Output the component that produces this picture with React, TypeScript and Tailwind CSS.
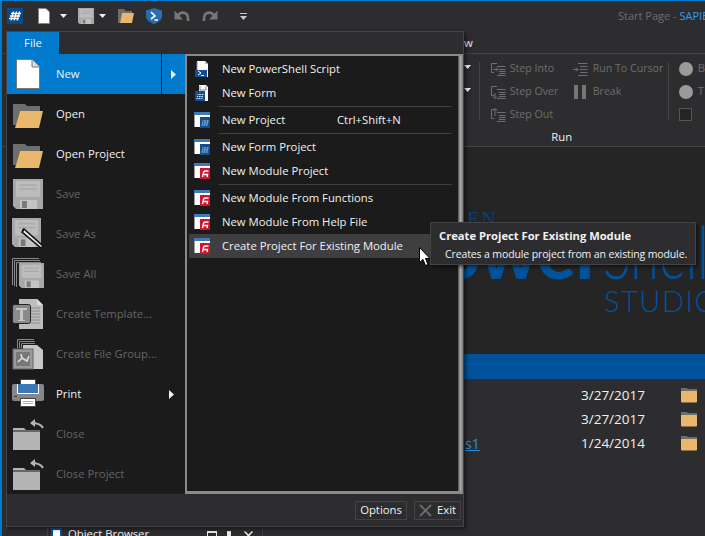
import React from 'react';

const G = '#b4b4b4';
const TAN = '#e8b76b';

// large (32px) menu icons
const BigDoc = () => (
  <svg width="32" height="32" viewBox="0 0 32 32" className="shrink-0">
    <path d="M4.5 1.5H20L27.5 9V29.5a1 1 0 0 1-1 1H5.5a1 1 0 0 1-1-1Z" fill="#fff" stroke="#777" />
    <path d="M20 1.5V9H27.5" fill="#ddd" stroke="#777" />
  </svg>
);

const BigFolder = () => (
  <svg width="32" height="32" viewBox="0 0 32 32" className="shrink-0">
    <path d="M1 6H13L15 8H28V13H8L4 27H1Z" fill="#6e6e6e" />
    <path d="M8 13H31L27 30H3Z" fill={TAN} />
  </svg>
);

const Floppy = ({ x = 1, y = 1, s = 30 }: { x?: number; y?: number; s?: number }) => (
  <g transform={`translate(${x} ${y}) scale(${s / 30})`}>
    <path d="M0 0H30V30H3L0 27Z" fill="#a8a8a8" />
    <rect x="3" y="2" width="24" height="16" rx="1" fill="#bcbcbc" />
    <path d="M6 6H24M6 10H24" stroke="#a0a0a0" strokeWidth="1" />
    <rect x="7" y="21" width="17" height="9" fill="#c4c4c4" />
    <rect x="9" y="22" width="5" height="7" fill="#7a7a7a" />
  </g>
);

const BigSave = () => (
  <svg width="32" height="32" viewBox="0 0 32 32" className="shrink-0">
    <Floppy />
  </svg>
);

const BigSaveAs = () => (
  <svg width="32" height="32" viewBox="0 0 32 32" className="shrink-0">
    <Floppy x={0} y={0} s={29} />
    <path d="M12 11L31 28L29 30L10 14Z" fill="#e4e4e4" stroke="#111" strokeWidth="1.6" />
    <path d="M10 11L13 11L11 14Z" fill="#111" />
  </svg>
);

const BigSaveAll = () => (
  <svg width="32" height="32" viewBox="0 0 32 32" className="shrink-0">
    <path d="M0.5 27V0.5H27M2.5 28V2.5H28M4.5 29V4.5H29" fill="none" stroke="#8a8a8a" />
    <Floppy x={7} y={5} s={25} />
  </svg>
);

const BigTemplate = () => (
  <svg width="32" height="32" viewBox="0 0 32 32" className="shrink-0">
    <path d="M7 1H25L31 7V31H7Z" fill="#bdbdbd" />
    <path d="M25 1V7H31" fill="#ddd" />
    <path d="M19 10H28M19 13H28M19 16H28M19 19H28M19 22H28M19 25H28" stroke="#8a8a8a" />
    <rect x="0.5" y="6.5" width="18" height="19" rx="2" fill="#8a8a8a" stroke="#222" />
    <path d="M4 10H15V12H11V22H13V23H6V22H8V12H4Z" fill="#c4c4c4" />
  </svg>
);

const BigGroup = () => (
  <svg width="32" height="32" viewBox="0 0 32 32" className="shrink-0">
    <path d="M5.5 10V1.5H22M7.5 10V3.5H23M9.5 10V5.5H23" fill="none" stroke="#8a8a8a" />
    <path d="M11 7H25L31 12V31H11Z" fill="#c8c8c8" />
    <rect x="1" y="11" width="20" height="20" fill="#9a9a9a" stroke="#666" />
    <rect x="4" y="14" width="14" height="14" fill="#777" />
    <path d="M6 24L10 20L9 16M10 20L15 23L17 18" fill="none" stroke="#ddd" strokeWidth="1.6" />
  </svg>
);

const BigPrint = () => (
  <svg width="32" height="32" viewBox="0 0 32 32" className="shrink-0">
    <rect x="8.5" y="1.5" width="15" height="8" fill="#fff" stroke="#444" />
    <rect y="6" width="32" height="17" rx="2" fill="#868686" />
    <rect x="5" y="6" width="22" height="10" rx="1" fill="#fff" />
    <rect x="6" y="6" width="20" height="9" fill="#3b78b8" />
    <rect x="2" y="18" width="3" height="1" fill="#333" />
    <rect x="8.5" y="20.5" width="15" height="8" fill="#fff" stroke="#444" />
    <path d="M11 23.5H21M11 25.5H21" stroke="#8fb3d9" />
  </svg>
);

const BigClose = () => (
  <svg width="32" height="32" viewBox="0 0 32 32" className="shrink-0">
    <path d="M1 10H12L14 12H28V32H1Z" fill={G} />
    <path d="M1 13H28" stroke="#1b1b1b" strokeWidth="1" />
    <path d="M31 10C29 6 25 5 19 5" fill="none" stroke={G} strokeWidth="2" />
    <path d="M23 1L18 5L23 9Z" fill={G} />
  </svg>
);

// small (16px) panel icons
const DocPS = () => (
  <svg width="16" height="16" viewBox="0 0 16 16" className="shrink-0">
    <path d="M3 0H11L14 3V16H3Z" fill="#fff" />
    <path d="M11 0V3H14" fill="#bbb" />
    <path d="M3 1V9" stroke="#888" />
    <rect x="1" y="9" width="12" height="7" fill="#0f4f91" />
    <path d="M4 10L7 12L4 14M7 14.5H10" fill="none" stroke="#fff" />
  </svg>
);

const Grid = ({ x, y }: { x: number; y: number }) => (
  <g>
    <path
      d={`M${x + 2} ${y + 3}H${x + 8}M${x + 1.5} ${y + 5}H${x + 7.5}M${x + 1} ${y + 7}H${x + 7}`}
      stroke="#dbe8f7"
      strokeWidth="1"
    />
    <path
      d={`M${x + 3.5} ${y + 2}L${x + 2.5} ${y + 8}M${x + 6} ${y + 2}L${x + 5} ${y + 8}`}
      stroke="#0f4f91"
      strokeWidth="0.8"
    />
  </g>
);

const DocForm = () => (
  <svg width="16" height="16" viewBox="0 0 16 16" className="shrink-0">
    <path d="M5 0H12L14 2V16H5Z" fill="#fff" />
    <path d="M6 1V5H12V1" fill="none" stroke="#888" />
    <rect x="1" y="6" width="10" height="10" fill="#0f4f91" />
    <Grid x={1.5} y={6.5} />
  </svg>
);

const ProjectIcon = ({ red }: { red?: boolean }) => (
  <svg width="16" height="16" viewBox="0 0 16 16" className="shrink-0">
    <rect width="16" height="15" fill="#fff" />
    <rect width="16" height="3" fill="#3e7ab8" />
    <rect x="0" y="3" width="1" height="12" fill="#999" />
    <rect x="6" y="5" width="10" height="11" fill={red ? '#d2122e' : '#0f4f91'} />
    {red ? (
      <path d="M8.5 14L9.5 9.5Q9.7 8 11.5 8H14.5M9.5 11.5H13.5L13 14" fill="none" stroke="#fff" strokeWidth="1.4" />
    ) : (
      <Grid x={6.5} y={6} />
    )}
  </svg>
);

// toolbar
const AppLogo = () => (
  <svg width="16" height="16" viewBox="0 0 16 16" className="shrink-0">
    <rect width="16" height="16" fill="#0b4a88" />
    <path d="M4 5.5H14M3 8H13M2 10.5H12" stroke="#fff" strokeWidth="1.3" />
    <path d="M6.5 3.5L4 12.5M9.5 3.5L7 12.5M12.5 3.5L10 12.5" stroke="#fff" strokeWidth="1.2" />
  </svg>
);

const DropArrow = () => (
  <svg width="7" height="4" viewBox="0 0 7 4" className="shrink-0">
    <path d="M0 0H7L3.5 4Z" fill="#f1f1f1" />
  </svg>
);

const SmallFolder = () => (
  <svg width="16" height="16" viewBox="0 0 16 16" className="shrink-0">
    <path d="M0 1H6L7 2H16V5H0Z" fill="#6e6e6e" />
    <path d="M0 4H16V14.5a1 1 0 0 1-1 1H1a1 1 0 0 1-1-1Z" fill={TAN} />
  </svg>
);

const ToolbarFolder = () => (
  <svg width="16" height="16" viewBox="0 0 16 16" className="shrink-0">
    <path d="M0 1H6L8 3H14V6H4L2 15H0Z" fill="#6e6e6e" />
    <path d="M4 5H16L14 15H2Z" fill={TAN} />
  </svg>
);

const Shield = () => (
  <svg width="16" height="16" viewBox="0 0 16 16" className="shrink-0">
    <path d="M8 0L16 2.5V8C16 12 12 14.5 8 16C4 14.5 0 12 0 8V2.5Z" fill="#2a6db0" />
    <path d="M5 4L9 8L5 11M8.5 12H12" fill="none" stroke="#fff" strokeWidth="1.6" />
  </svg>
);

const Undo = ({ flip }: { flip?: boolean }) => (
  <svg width="16" height="16" viewBox="0 0 16 16" className={`shrink-0 ${flip ? '-scale-x-100' : ''}`}>
    <path d="M4 7.5Q7 3.5 11 5Q14.5 6.5 14 13" fill="none" stroke="#777" strokeWidth="2.6" />
    <path d="M0.5 2.5V11.5H9Z" fill="#777" />
  </svg>
);

const Overflow = () => (
  <svg width="7" height="7" viewBox="0 0 7 7" className="shrink-0">
    <path d="M0 0H7V1H0Z" fill="#c8c8c8" />
    <path d="M0 3H7L3.5 7Z" fill="#c8c8c8" />
  </svg>
);

// ribbon
const Step = ({ kind }: { kind: string }) => (
  <svg width="16" height="16" viewBox="0 0 16 16" className="shrink-0" fill="none" stroke="#6f6f6f">
    <path d="M7 2.5H1.5V11.5H4" />
    <path d="M7 5.5H15.5M9 8.5H15.5M9 10.5H15.5M9 12.5H15.5M7 14.5H15.5" />
    {kind === 'into' && <path d="M3 8.5H8M6 6.5L8 8.5L6 10.5" />}
    {kind === 'over' && <path d="M5 9V14.5M3 12.5L5 14.5L7 12.5" />}
    {kind === 'out' && <path d="M5 9V1.5M3 3.5L5 1.5L7 3.5" />}
  </svg>
);

const RunCursor = () => (
  <svg width="16" height="16" viewBox="0 0 16 16" className="shrink-0" fill="none" stroke="#6f6f6f">
    <path d="M6 2.5H15.5M8 5.5H15.5M8 8.5H15.5M8 11.5H15.5M6 14.5H15.5" />
    <path d="M1 8.5H6M4 6.5L6 8.5L4 10.5" />
  </svg>
);

const Pause = () => (
  <svg width="16" height="16" viewBox="0 0 16 16" className="shrink-0">
    <rect x="2" y="1" width="4" height="14" fill="#777" />
    <rect x="10" y="1" width="4" height="14" fill="#777" />
  </svg>
);

const mainItems = [
  { label: 'New', icon: <BigDoc />, active: true },
  { label: 'Open', icon: <BigFolder />, on: true },
  { label: 'Open Project', icon: <BigFolder />, on: true },
  { label: 'Save', icon: <BigSave /> },
  { label: 'Save As', icon: <BigSaveAs /> },
  { label: 'Save All', icon: <BigSaveAll /> },
  { label: 'Create Template...', icon: <BigTemplate /> },
  { label: 'Create File Group...', icon: <BigGroup /> },
  { label: 'Print', icon: <BigPrint />, on: true, arrow: true },
  { label: 'Close', icon: <BigClose /> },
  { label: 'Close Project', icon: <BigClose /> },
];

const Arrow = () => (
  <svg width="5" height="9" viewBox="0 0 5 9" className="shrink-0">
    <path d="M0 0L5 4.5L0 9Z" fill="#f1f1f1" />
  </svg>
);

const SubItem = ({ icon, label, keys, hover }: { icon: React.ReactNode; label: string; keys?: string; hover?: boolean }) => (
  <div className={`flex h-[24px] items-center pl-[5px] ${hover ? 'bg-[#3f3f41]' : ''}`}>
    {icon}
    <span className="ml-[12px] w-[115px] whitespace-nowrap">{label}</span>
    {keys && <span className="whitespace-nowrap">{keys}</span>}
  </div>
);

const SubSep = () => (
  <div className="flex h-[3px] items-center pl-[30px] pr-[6px]">
    <div className="h-px w-full bg-[#3f3f41]" />
  </div>
);

const RibbonRow = ({ icon, label, gap }: { icon: React.ReactNode; label: string; gap: string }) => (
  <div className={`flex h-[23px] items-center whitespace-nowrap text-[10.6px] ${gap}`}>
    {icon}
    <span>{label}</span>
  </div>
);

const rows = [
  { date: '3/27/2017' },
  { date: '3/27/2017' },
  { date: '1/24/2014', link: 's1' },
];

export default function App() {
  return (
    <div className="relative flex h-[536px] w-[705px] flex-col overflow-hidden border-l-2 border-t border-[#007acc] bg-[#2d2d30] font-['Open_Sans',sans-serif] text-[11.3px] text-[#f1f1f1]">
      {/* title bar and quick access */}
      <div className="flex h-[30px] shrink-0 items-center pl-[5px]">
        <AppLogo />
        <div className="ml-[7px] h-[16px] w-px bg-[#46464a]" />
        <div className="ml-[8px] flex w-[16px] justify-center">
          <svg width="12" height="16" viewBox="0 0 12 16">
            <path d="M0.5 0.5H8L11.5 4V15.5H0.5Z" fill="#fff" stroke="#888" />
          </svg>
        </div>
        <div className="ml-[10px]">
          <DropArrow />
        </div>
        <div className="ml-[11px]">
          <svg width="16" height="16" viewBox="0 0 30 30">
            <Floppy x={0} y={0} s={30} />
          </svg>
        </div>
        <div className="ml-[5px]">
          <DropArrow />
        </div>
        <div className="ml-[12px]">
          <ToolbarFolder />
        </div>
        <div className="ml-[12px]">
          <Shield />
        </div>
        <div className="ml-[12px]">
          <Undo />
        </div>
        <div className="ml-[12px]">
          <Undo flip />
        </div>
        <div className="ml-[22px]">
          <Overflow />
        </div>
        <span className="ml-[371px] whitespace-nowrap text-[11px] text-[#6d6d6d]">
          Start Page - <span className="text-[#3399ff]">SAPIEN PowerShell Studio</span>
        </span>
      </div>

      {/* ribbon tabs */}
      <div className="flex h-[23px] shrink-0 items-end border-b border-[#434346] pb-[1px] pl-[462px]">
        <span>w</span>
      </div>

      {/* ribbon body */}
      <div className="flex h-[93px] shrink-0 border-b border-[#434346] pl-[462px] text-[#6d6d6d]">
        <div className="flex w-[15px] flex-col gap-[19px] pt-[11px]">
          <DropArrow />
          <DropArrow />
        </div>
        <div className="mt-[8px] h-[58px] w-px bg-[#434346]" />
        <div className="flex w-[191px] flex-col">
          <div className="flex pl-[10px] pt-[3px]">
            <div className="w-[82px]">
              <RibbonRow icon={<Step kind="into" />} label="Step Into" gap="gap-[4px]" />
              <RibbonRow icon={<Step kind="over" />} label="Step Over" gap="gap-[4px]" />
              <RibbonRow icon={<Step kind="out" />} label="Step Out" gap="gap-[4px]" />
            </div>
            <div>
              <RibbonRow icon={<RunCursor />} label="Run To Cursor" gap="gap-[5px]" />
              <RibbonRow icon={<Pause />} label="Break" gap="gap-[5px]" />
            </div>
          </div>
          <div className="mt-[3px] pr-[24px] text-center text-[#f1f1f1]">Run</div>
        </div>
        <div className="mt-[8px] h-[58px] w-px bg-[#434346]" />
        <div className="flex flex-col pl-[10px] pt-[3px]">
          <div className="flex h-[23px] items-center gap-[5px]">
            <div className="h-[14px] w-[14px] rounded-full bg-[#9a9a9a]" />
            <span>B</span>
          </div>
          <div className="flex h-[23px] items-center gap-[5px]">
            <div className="h-[14px] w-[14px] rounded-full bg-[#9a9a9a]" />
            <span>T</span>
          </div>
          <div className="flex h-[23px] items-center gap-[5px]">
            <div className="h-[13px] w-[13px] border border-[#555] bg-[#252526]" />
          </div>
        </div>
      </div>

      {/* docked panel and start page */}
      <div className="flex min-h-0 flex-1">
        <div className="w-[261px] shrink-0 border-r border-[#3f3f41] pl-[45px] pt-[380px]">
          <div className="flex h-[20px] items-start border-l border-[#434346] pl-[3px]">
            <div className="mt-[1px] h-[11px] w-[11px] shrink-0 border-2 border-[#0f4f91] bg-white" />
            <span className="ml-[6px] mt-[1px] whitespace-nowrap leading-[12px]">Object Browser</span>
            <div className="ml-[58px] mt-[4px] h-[9px] w-[10px] shrink-0 border border-t-2 border-[#e8e8e8]" />
            <div className="ml-[10px] mt-[4px] h-[9px] w-[4px] shrink-0 bg-[#e8e8e8]" />
            <svg width="9" height="9" viewBox="0 0 9 9" className="ml-[13px] mt-[4px] shrink-0">
              <path d="M0.5 0.5L8.5 8.5M8.5 0.5L0.5 8.5" stroke="#e8e8e8" strokeWidth="1.5" />
            </svg>
          </div>
        </div>
        <div className="flex min-w-0 flex-1 flex-col bg-[#252526]">
          <div className="h-[64px] shrink-0" />
          <div className="h-[16px] shrink-0 whitespace-nowrap pl-[153px] font-['Liberation_Serif',serif] text-[20px] leading-[16px] tracking-[2px] text-[#0b3f70]">
            SAPIEN
          </div>
          <div className="h-[62px] shrink-0 whitespace-nowrap pl-[132px] font-['Lato',sans-serif] text-[72px] leading-[49px] text-[#00529b]">
            <span className="font-black">Power</span>
            <span className="inline-block origin-left scale-x-[0.72] font-light">Shell</span>
          </div>
          <div className="h-[65px] shrink-0 whitespace-nowrap pl-[341px] font-['Lato',sans-serif] text-[29px] font-light leading-[23px] tracking-[1.5px] text-[#00529b]">
            STUDIO
          </div>
          <div className="h-[25px] shrink-0 bg-[#00529b]" />
          <div className="flex-1 bg-[#2d2d30] pt-[4px]">
            {rows.map((r, i) => (
              <div key={i} className="relative flex h-[24px] items-center pl-[318px]">
                {r.link && (
                  <a href="#s1" className="absolute left-[202px] text-[14px] text-[#2f8de4] underline">
                    {r.link}
                  </a>
                )}
                <span className="w-[100px] text-[13.5px]">{r.date}</span>
                <SmallFolder />
              </div>
            ))}
          </div>
        </div>
      </div>

      {/* file menu */}
      <div className="absolute left-[4px] top-[30px] flex h-[496px] w-[458px] flex-col border border-[#434346] bg-[#2d2d30] shadow-[2px_2px_4px_rgba(0,0,0,0.5)]">
        <div className="h-[22px] shrink-0">
          <div className="flex h-[22px] w-[52px] items-center justify-center bg-[#007acc]">File</div>
        </div>
        <div className="flex h-[440px] shrink-0 bg-[#1b1b1b]">
          <div className="w-[178px] shrink-0">
            {mainItems.map((m) => (
              <div
                key={m.label}
                className={`flex h-[40px] items-center pl-[5px] ${m.active ? 'bg-[#007acc]' : ''} ${
                  m.active || m.on ? 'text-[#f1f1f1]' : 'text-[#656565]'
                }`}
              >
                {m.icon}
                <span className="ml-[12px] whitespace-nowrap">{m.label}</span>
                {m.active && (
                  <div className="ml-auto flex h-full w-[24px] items-center justify-center border-l border-[#1b1b1b]">
                    <Arrow />
                  </div>
                )}
                {m.arrow && (
                  <div className="ml-auto mr-[11px]">
                    <Arrow />
                  </div>
                )}
              </div>
            ))}
          </div>
          <div className="flex min-w-0 flex-1 border-b-[3px] border-l-2 border-t-2 border-[#8a8a8a]">
            <div className="flex-1 pl-[2px] pt-[1px]">
              <SubItem icon={<DocPS />} label="New PowerShell Script" />
              <SubItem icon={<DocForm />} label="New Form" />
              <SubSep />
              <SubItem icon={<ProjectIcon />} label="New Project" keys="Ctrl+Shift+N" />
              <SubSep />
              <SubItem icon={<ProjectIcon />} label="New Form Project" />
              <SubItem icon={<ProjectIcon red />} label="New Module Project" />
              <SubSep />
              <SubItem icon={<ProjectIcon red />} label="New Module From Functions" />
              <SubItem icon={<ProjectIcon red />} label="New Module From Help File" />
              <div className="pr-[25px]">
                <SubItem icon={<ProjectIcon red />} label="Create Project For Existing Module" hover />
              </div>
            </div>
            <div className="w-[5px] shrink-0 bg-gradient-to-r from-[#555] via-[#aaa] to-[#777]" />
          </div>
        </div>
        <div className="flex flex-1 items-center justify-end gap-[7px] pr-[2px]">
          <div className="flex h-[19px] w-[52px] items-center justify-center border border-[#434346]">Options</div>
          <div className="flex h-[19px] w-[47px] items-center justify-center gap-[5px] border border-[#434346]">
            <svg width="13" height="13" viewBox="0 0 13 13">
              <path d="M1 1L12 12M12 1L1 12" stroke="#6c6c6c" strokeWidth="1.8" />
            </svg>
            <span>Exit</span>
          </div>
        </div>
      </div>

      {/* tooltip */}
      <div className="absolute left-[428px] top-[221px] h-[43px] w-[266px] border border-[#434346] bg-[#2d2d30] pl-[8px] pt-[3px] leading-[19px] shadow-[2px_2px_3px_rgba(0,0,0,0.5)]">
        <div className="whitespace-nowrap text-[11.2px] font-bold">Create Project For Existing Module</div>
        <div className="whitespace-nowrap pl-[6px] text-[10.5px] tracking-[-0.12px]">
          Creates a module project from an existing module.
        </div>
      </div>

      {/* mouse pointer */}
      <svg width="12" height="19" viewBox="0 0 12 19" className="absolute left-[417px] top-[246px]">
        <path d="M0.5 0.5V15.5L4 12.5L6.5 18.5L9 17.5L6.5 11.5H11Z" fill="#fff" stroke="#000" />
      </svg>
    </div>
  );
}
